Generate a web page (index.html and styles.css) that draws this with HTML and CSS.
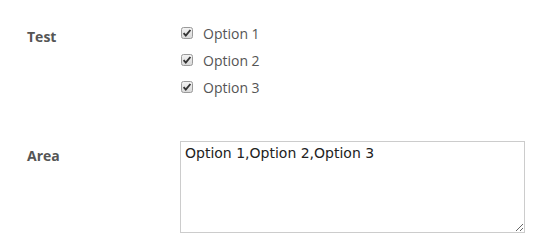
FILE: index.html
```html
<!DOCTYPE html>
<html>
<head>
<meta charset="utf-8">
<link rel="stylesheet" href="styles.css">
</head>
<body>
<form class="form">
  <div class="row">
    <div class="label">Test</div>
    <div class="field checks">
      <label class="check">
        <input type="checkbox" checked class="native">
        <svg class="box" width="12" height="12" viewBox="0 0 12 12"><defs><linearGradient id="g" x1="0" y1="0" x2="0" y2="1"><stop offset="0" stop-color="#f4f4f4"/><stop offset="1" stop-color="#d8d8d8"/></linearGradient></defs><rect x="0.5" y="0.5" width="11" height="11" rx="2" fill="url(#g)" stroke="#9a9a9a"/><path d="M2.6 6.2 L4.8 8.6 L9.4 3" fill="none" stroke="#333" stroke-width="1.9"/></svg>
        <span>Option 1</span>
      </label>
      <label class="check">
        <input type="checkbox" checked class="native">
        <svg class="box" width="12" height="12" viewBox="0 0 12 12"><rect x="0.5" y="0.5" width="11" height="11" rx="2" fill="url(#g)" stroke="#9a9a9a"/><path d="M2.6 6.2 L4.8 8.6 L9.4 3" fill="none" stroke="#333" stroke-width="1.9"/></svg>
        <span>Option 2</span>
      </label>
      <label class="check">
        <input type="checkbox" checked class="native">
        <svg class="box" width="12" height="12" viewBox="0 0 12 12"><rect x="0.5" y="0.5" width="11" height="11" rx="2" fill="url(#g)" stroke="#9a9a9a"/><path d="M2.6 6.2 L4.8 8.6 L9.4 3" fill="none" stroke="#333" stroke-width="1.9"/></svg>
        <span>Option 3</span>
      </label>
    </div>
  </div>
  <div class="row area-row">
    <div class="label">Area</div>
    <div class="field">
      <textarea class="area">Option 1,Option 2,Option 3</textarea>
    </div>
  </div>
</form>
</body>
</html>
```
FILE: styles.css
```css
html, body {
  margin: 0;
  padding: 0;
  background: #fff;
}
body {
  font-family: "Open Sans", "DejaVu Sans", sans-serif;
  color: #555;
}
.form {
  padding: 20px 0 0 27px;
}
.row {
  display: flex;
}
.label {
  width: 153px;
  padding-top: 3px;
  font-weight: bold;
  font-size: 14px;
  line-height: 27px;
  color: #555;
}
.checks {
  display: flex;
  flex-direction: column;
}
.check {
  display: flex;
  align-items: center;
  height: 27px;
  font-size: 14px;
  color: #555;
}
.native {
  display: none;
}
.box {
  margin: 0 10px 0 1px;
  position: relative;
  top: -1px;
}
.area-row {
  margin-top: 40px;
}
.area-row .label {
  padding-top: 0;
  line-height: 30px;
}
.area {
  box-sizing: border-box;
  width: 345px;
  height: 92px;
  margin: 0;
  border: 1px solid #ccc;
  padding: 3px 4px;
  font-family: "DejaVu Sans", Verdana, sans-serif;
  font-size: 14px;
  line-height: 16px;
  color: #222;
  resize: both;
  outline: none;
}
```
